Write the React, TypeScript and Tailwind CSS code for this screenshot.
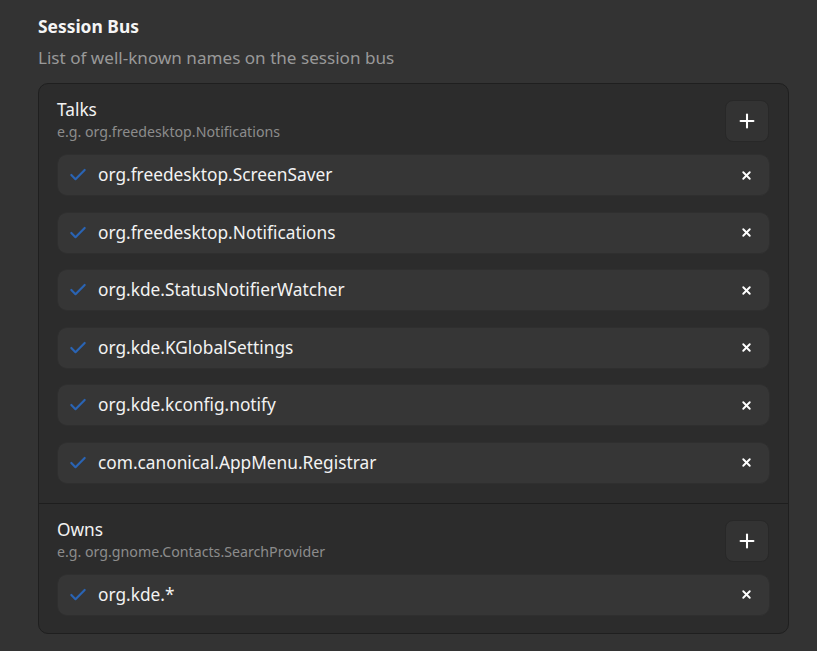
import { Check, Plus, X } from 'lucide-react';

const TALKS = [
  'org.freedesktop.ScreenSaver',
  'org.freedesktop.Notifications',
  'org.kde.StatusNotifierWatcher',
  'org.kde.KGlobalSettings',
  'org.kde.kconfig.notify',
  'com.canonical.AppMenu.Registrar',
];
const OWNS = ['org.kde.*'];

function Row({ name }: { name: string }) {
  return (
    <div className="flex items-center h-[42px] rounded-[10px] bg-[#363636] border border-[#2f2f2f] pl-[10px] pr-[16px]">
      <Check className="w-[20px] h-[20px] text-[#2a64b4]" strokeWidth={2.6} />
      <span className="ml-[10px] text-[17.3px] text-[#f2f2f2] flex-1">{name}</span>
      <X className="w-[13px] h-[13px] text-white" strokeWidth={3.5} />
    </div>
  );
}

function Group({ title, hint, names, last }: { title: string; hint: string; names: string[]; last?: boolean }) {
  return (
    <div className={`px-[18px] pt-[16px] ${last ? 'pb-[17px]' : 'pb-[19px]'}`}>
      <div className="flex items-start justify-between">
        <div>
          <div className="text-[17.3px] leading-[20px] text-[#f2f2f2]">{title}</div>
          <div className="text-[14.2px] leading-[18px] mt-[3px] text-[#8c8c8c]">{hint}</div>
        </div>
        <button className="w-[44px] h-[42px] mr-px rounded-[8px] bg-[#333333] border border-[#282828] flex items-center justify-center">
          <Plus className="w-[22px] h-[22px] text-white" strokeWidth={2.25} />
        </button>
      </div>
      <div className="mt-[12px] flex flex-col gap-[15.6px]">
        {names.map((n) => <Row key={n} name={n} />)}
      </div>
    </div>
  );
}

export default function App() {
  return (
    <div className="w-[817px] h-[651px] overflow-hidden bg-[#333333] px-[38px] pt-[15px] font-['Noto_Sans','Open_Sans',sans-serif]">
      <h1 className="text-[17.4px] leading-[22px] font-bold text-[#f5f5f5]">Session Bus</h1>
      <p className="mt-[10px] text-[17.1px] leading-[22px] text-[#999999]">List of well-known names on the session bus</p>
      <div className="mt-[14px] w-[751px] rounded-[10px] bg-[#2c2c2c] border border-[#1f1f1f]">
        <Group title="Talks" hint="e.g. org.freedesktop.Notifications" names={TALKS} />
        <div className="h-px bg-[#1e1e1e]" />
        <Group title="Owns" hint="e.g. org.gnome.Contacts.SearchProvider" names={OWNS} last />
      </div>
    </div>
  );
}
